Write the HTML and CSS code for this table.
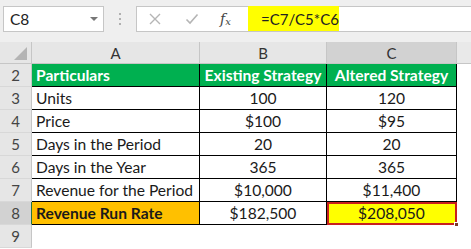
FILE: index.html
```html
<!DOCTYPE html>
<html>
<head>
<meta charset="utf-8">
<link rel="stylesheet" href="styles.css">
</head>
<body>
<div class="topbar">
  <div class="namebox"><span class="ref">C8</span><span class="caret"></span></div>
  <div class="dots"><i></i><i></i><i></i></div>
  <div class="fbar">
    <div class="ficons">
      <svg class="ico" width="14" height="14" viewBox="0 0 14 14"><path d="M2 2 L12 12 M12 2 L2 12" stroke="#b5b5b5" stroke-width="1.4" fill="none"/></svg>
      <svg class="ico" width="14" height="14" viewBox="0 0 14 14"><path d="M1.5 7.5 L5 11 L12.5 2.5" stroke="#b5b5b5" stroke-width="1.6" fill="none"/></svg>
      <span class="fx">f<sub>x</sub></span>
    </div>
    <div class="formula">=C7/C5*C6</div>
  </div>
</div>
<div class="sheet">
  <div class="corner"><span class="tri"></span></div>
  <div class="ch">A</div>
  <div class="ch">B</div>
  <div class="ch sel">C</div>
  <div class="ch rest"></div>

  <div class="rh">2</div>
  <div class="c hd">Particulars</div>
  <div class="c hd ctr">Existing Strategy</div>
  <div class="c hd ctr">Altered Strategy</div>
  <div class="e"></div>

  <div class="rh">3</div>
  <div class="c">Units</div>
  <div class="c ctr">100</div>
  <div class="c ctr">120</div>
  <div class="e"></div>

  <div class="rh">4</div>
  <div class="c">Price</div>
  <div class="c ctr">$100</div>
  <div class="c ctr">$95</div>
  <div class="e"></div>

  <div class="rh">5</div>
  <div class="c">Days in the Period</div>
  <div class="c ctr">20</div>
  <div class="c ctr">20</div>
  <div class="e"></div>

  <div class="rh">6</div>
  <div class="c">Days in the Year</div>
  <div class="c ctr">365</div>
  <div class="c ctr">365</div>
  <div class="e"></div>

  <div class="rh">7</div>
  <div class="c">Revenue for the Period</div>
  <div class="c ctr">$10,000</div>
  <div class="c ctr">$11,400</div>
  <div class="e"></div>

  <div class="rh selrow">8</div>
  <div class="c gold">Revenue Run Rate</div>
  <div class="c ctr">$182,500</div>
  <div class="c ctr active">$208,050<span class="handle"></span></div>
  <div class="e"></div>

  <div class="rh">9</div>
  <div class="e"></div>
  <div class="e"></div>
  <div class="e"></div>
  <div class="e"></div>
</div>
</body>
</html>
```
FILE: styles.css
```css
* { box-sizing: border-box; }
html, body { margin: 0; padding: 0; }
body {
  width: 471px;
  height: 249px;
  overflow: hidden;
  background: #fff;
  font-family: Lato, "Open Sans", sans-serif;
}
.topbar {
  height: 42px;
  background: #efefef;
  display: flex;
  align-items: flex-start;
  padding-top: 6px;
  padding-left: 3px;
}
.namebox {
  width: 101px;
  height: 26px;
  background: #fff;
  border: 1px solid #c6c6c6;
  display: flex;
  align-items: center;
  justify-content: space-between;
  padding: 0 5px 0 6px;
  font-size: 15.5px;
  color: #222;
}
.caret {
  width: 0; height: 0;
  border-left: 4px solid transparent;
  border-right: 4px solid transparent;
  border-top: 4px solid #777;
}
.dots {
  width: 32px;
  height: 26px;
  display: flex;
  flex-direction: column;
  align-items: center;
  justify-content: center;
  gap: 3px;
}
.dots i {
  width: 2px; height: 2px; background: #b0b0b0; display: block;
}
.fbar {
  flex: 1;
  height: 26px;
  background: #fff;
  border: 1px solid #c6c6c6;
  border-right: none;
  display: flex;
}
.ficons {
  width: 111px;
  display: flex;
  align-items: center;
  padding-left: 11px;
  gap: 23px;
}
.fx {
  font-family: "DejaVu Serif", serif;
  font-style: italic;
  font-size: 14px;
  color: #444;
  margin-left: -2px;
}
.fx sub { font-size: 10px; vertical-align: baseline; position: relative; top: 1px; }
.formula {
  width: 91px;
  height: 25px;
  margin-top: -1px;
  background: #ffff00;
  font-size: 15px;
  color: #222;
  padding-left: 13px;
  display: flex;
  align-items: center;
}
.sheet {
  display: grid;
  grid-template-columns: 32px 168px 127px 130px 1fr;
  grid-template-rows: 22px repeat(8, 23px);
  font-size: 15.6px;
}
.corner {
  background: #e6e6e6;
  border-right: 1px solid #c6c6c6;
  border-bottom: 1px solid #c6c6c6;
  position: relative;
}
.tri {
  position: absolute;
  right: 4px; bottom: 3px;
  width: 0; height: 0;
  border-left: 13px solid transparent;
  border-bottom: 13px solid #b4b4b4;
}
.ch {
  background: #e6e6e6;
  border-right: 1px solid #c6c6c6;
  border-bottom: 1px solid #c6c6c6;
  display: flex;
  align-items: center;
  justify-content: center;
  color: #333;
  font-size: 15px;
}
.ch.sel { background: #d2d2d2; }
.ch.rest { background: #e9e9e9; border-right: none; }
.rh {
  background: #e6e6e6;
  border-right: 1px solid #c6c6c6;
  border-bottom: 1px solid #d8d8d8;
  display: flex;
  align-items: center;
  justify-content: center;
  color: #444;
  font-size: 15px;
}
.rh.selrow { background: #d2d2d2; border-right: 1px solid #217346; }
.c {
  border-right: 1px solid #000;
  border-bottom: 1px solid #000;
  display: flex;
  align-items: center;
  padding-left: 4px;
  color: #1a1a1a;
  white-space: nowrap;
  position: relative;
}
.ctr { justify-content: center; padding-left: 0; }
.hd {
  background: #00b050;
  color: #fff;
  font-weight: bold;
}
.gold {
  background: #ffc000;
  font-weight: bold;
}
.active {
  background: #ffff00;
  outline: 2px solid #c8201e;
  outline-offset: -2px;
}
.handle {
  position: absolute;
  right: -3px; bottom: -3px;
  width: 5px; height: 5px;
  background: #7a3a2a;
  border: 1px solid #fff;
}
.e { background: #fff; }
```
